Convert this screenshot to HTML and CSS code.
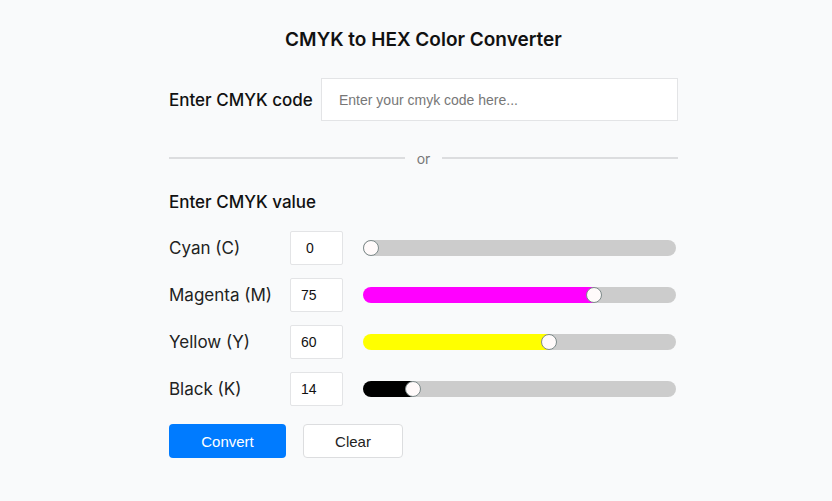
FILE: index.html
```html
<!DOCTYPE html>
<html lang="en">

<head>
    <meta charset="UTF-8">
    <meta name="viewport" content="width=device-width, initial-scale=1.0">
    <title>CMYK to HEX Color Converter</title>
    <link rel="stylesheet" href="styles.css">
</head>

<body>
    <div class="converter">
        <h1 class="title">CMYK to HEX Color Converter</h1>

        <div class="code-row">
            <label class="section-label" for="cmyk-code">Enter CMYK code</label>
            <input type="text" id="cmyk-code" class="code-input" placeholder="Enter your cmyk code here...">
        </div>

        <div class="divider">
            <span class="divider-line"></span>
            <span class="divider-text">or</span>
            <span class="divider-line"></span>
        </div>

        <div class="section-label value-heading">Enter CMYK value</div>

        <div class="channels">
            <div class="channel">
                <label class="channel-label">Cyan (C)</label>
                <input type="text" class="channel-input single" value="0">
                <input type="range" class="slider" min="0" max="100" value="0"
                    style="background: linear-gradient(to right, #00ffff 0%, #00ffff 0%, #ccc 0%);">
            </div>
            <div class="channel">
                <label class="channel-label">Magenta (M)</label>
                <input type="text" class="channel-input" value="75">
                <input type="range" class="slider" min="0" max="100" value="75"
                    style="background: linear-gradient(to right, #ff00ff 0, #ff00ff 231px, #ccc 231px);">
            </div>
            <div class="channel">
                <label class="channel-label">Yellow (Y)</label>
                <input type="text" class="channel-input" value="60">
                <input type="range" class="slider" min="0" max="100" value="60"
                    style="background: linear-gradient(to right, #ffff00 0, #ffff00 186px, #ccc 186px);">
            </div>
            <div class="channel">
                <label class="channel-label">Black (K)</label>
                <input type="text" class="channel-input" value="14">
                <input type="range" class="slider" min="0" max="100" value="14"
                    style="background: linear-gradient(to right, #000 0, #000 49px, #ccc 49px);">
            </div>
        </div>

        <div class="actions">
            <button class="btn btn-primary">Convert</button>
            <button class="btn btn-secondary">Clear</button>
        </div>
    </div>
</body>

</html>
```

FILE: styles.css
```css
* {
    margin: 0;
    padding: 0;
    box-sizing: border-box;
    font-family: Inter, "Noto Sans", sans-serif;
}

body {
    background-color: #f9fafb;
    color: #111;
    padding-left: 15px;
}

.converter {
    width: 509px;
    margin: 0 auto;
    padding-top: 28px;
}

.title {
    font-size: 19px;
    font-weight: 600;
    line-height: 24px;
    text-align: center;
    margin-bottom: 26px;
}

.section-label {
    font-size: 17px;
    font-weight: 500;
    line-height: 20px;
}

.code-row {
    display: flex;
    align-items: center;
}

.code-row .section-label {
    width: 152px;
    flex-shrink: 0;
}

/* champs et boutons gardent la police du navigateur */
.code-input,
.channel-input,
.btn {
    font-family: "Liberation Sans", Arial, sans-serif;
}

.code-input {
    flex: 1;
    height: 43px;
    padding: 0 17px;
    border: 1px solid #e3e4e6;
    background-color: #fff;
    font-size: 14px;
    color: #333;
    outline: none;
}

.code-input::placeholder {
    color: #777;
}

.divider {
    display: flex;
    align-items: center;
    gap: 12px;
    height: 20px;
    margin-top: 27px;
}

.divider-line {
    flex: 1;
    height: 2px;
    background-color: #dcdddf;
}

.divider-text {
    font-size: 14px;
    color: #777;
}

.value-heading {
    margin-top: 24px;
}

.channels {
    display: flex;
    flex-direction: column;
    gap: 13px;
    margin-top: 19px;
}

.channel {
    display: flex;
    align-items: center;
    height: 34px;
}

.channel-label {
    width: 121px;
    font-size: 17px;
    color: #222;
}

.channel-input {
    width: 53px;
    height: 34px;
    padding: 0 10px;
    border: 1px solid #e3e4e6;
    border-radius: 2px;
    background-color: #fff;
    font-size: 14px;
    color: #111;
    outline: none;
}

.channel-input.single {
    padding-left: 15px;
}

.slider {
    -webkit-appearance: none;
    appearance: none;
    flex: 1;
    height: 16px;
    margin: 0 2px 0 20px;
    border-radius: 8px;
    background-color: #ccc;
    outline: none;
}

.slider::-webkit-slider-thumb {
    -webkit-appearance: none;
    width: 16px;
    height: 16px;
    border-radius: 50%;
    background-color: #fffafa;
    border: 1px solid #7d8a8a;
    cursor: pointer;
}

.actions {
    display: flex;
    gap: 17px;
    margin-top: 18px;
}

.btn {
    height: 34px;
    font-size: 15px;
    border-radius: 4px;
    cursor: pointer;
}

.btn-primary {
    width: 117px;
    background-color: #007bff;
    border: none;
    color: #fff;
}

.btn-secondary {
    width: 100px;
    background-color: #fff;
    border: 1px solid #dcdddf;
    color: #222;
}
```
